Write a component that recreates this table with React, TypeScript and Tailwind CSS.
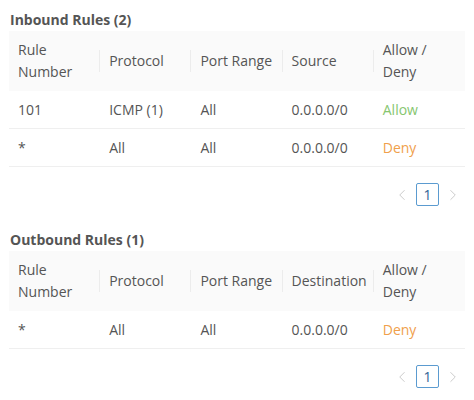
import { ChevronLeft, ChevronRight } from "lucide-react";

type Rule = { num: string; protocol: string; port: string; addr: string; action: "Allow" | "Deny" };

const inbound: Rule[] = [
  { num: "101", protocol: "ICMP (1)", port: "All", addr: "0.0.0.0/0", action: "Allow" },
  { num: "*", protocol: "All", port: "All", addr: "0.0.0.0/0", action: "Deny" },
];

const outbound: Rule[] = [
  { num: "*", protocol: "All", port: "All", addr: "0.0.0.0/0", action: "Deny" },
];

const HeadCell = ({ children, divider = true }: { children: React.ReactNode; divider?: boolean }) => (
  <th className="relative px-[9px] py-2 text-left font-normal align-middle">
    {children}
    {divider && <span className="absolute right-0 top-1/2 -translate-y-1/2 h-[22px] w-px bg-[#ececec]"></span>}
  </th>
);

const RulesTable = ({ title, addrLabel, rows }: { title: string; addrLabel: string; rows: Rule[] }) => {
  return (
    <section className="px-[9px]">
      <h2 className="px-px text-[14px] leading-[22px] font-bold text-[#555] mt-[9px]">{title}</h2>
      <table className="w-full table-fixed border-collapse text-[14px] leading-[22px] text-[#555]">
        <thead className="bg-[#fafafa]">
          <tr>
            <HeadCell>Rule Number</HeadCell>
            <HeadCell>Protocol</HeadCell>
            <HeadCell>Port Range</HeadCell>
            <HeadCell>{addrLabel}</HeadCell>
            <HeadCell divider={false}>Allow / Deny</HeadCell>
          </tr>
        </thead>
        <tbody>
          {rows.map((r, i) => (
            <tr key={i} className="border-b border-[#efefef]">
              <td className="px-[9px] pt-2 pb-[7px]">{r.num}</td>
              <td className="px-[9px] pt-2 pb-[7px]">{r.protocol}</td>
              <td className="px-[9px] pt-2 pb-[7px]">{r.port}</td>
              <td className="px-[9px] pt-2 pb-[7px]">{r.addr}</td>
              <td className={"px-[9px] pt-2 pb-[7px] " + (r.action === "Allow" ? "text-[#86c66f]" : "text-[#f0a04b]")}>
                {r.action}
              </td>
            </tr>
          ))}
        </tbody>
      </table>
      <div className="flex items-center justify-end gap-[5px] pt-[16px] pr-[3px]">
        <ChevronLeft className="h-[18px] w-[18px] text-[#c8c8c8]" strokeWidth={1.25} />
        <span className="flex h-[23px] w-[23px] items-center justify-center rounded-[2px] border border-[#5b9bd0] text-[14px] text-[#2f6496]">
          1
        </span>
        <ChevronRight className="h-[18px] w-[18px] text-[#c8c8c8]" strokeWidth={1.25} />
      </div>
    </section>
  );
};

export default function App() {
  return (
    <div className="w-[474px] h-[400px] bg-white font-['Open_Sans',sans-serif]">
      <RulesTable title="Inbound Rules (2)" addrLabel="Source" rows={inbound} />
      <div className="h-[14px]"></div>
      <RulesTable title="Outbound Rules (1)" addrLabel="Destination" rows={outbound} />
    </div>
  );
}
